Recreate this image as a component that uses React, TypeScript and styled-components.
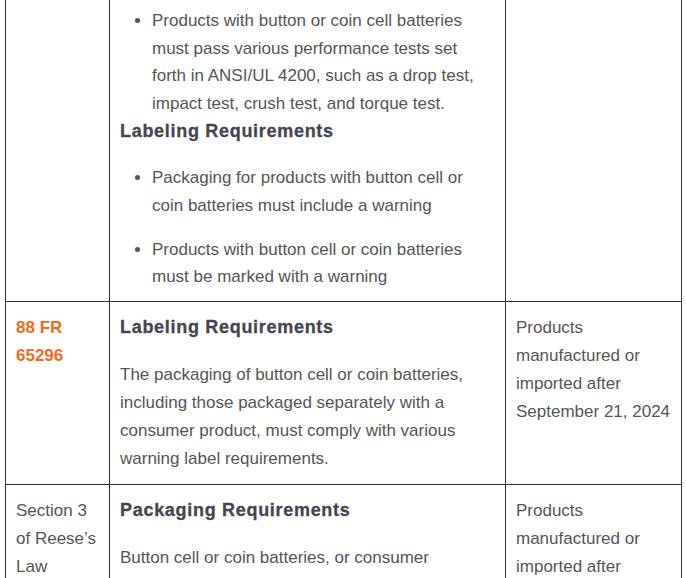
import { createGlobalStyle } from "styled-components";
import styled from "styled-components";

const GlobalStyle = createGlobalStyle`
  html, body {
    margin: 0;
    padding: 0;
    background: #fff;
  }
  body {
    font-family: "Liberation Sans", Arial, sans-serif;
    color: #555;
    overflow: hidden;
  }
`;

const Page = styled.div`
  padding: 0 0 0 5px;
  width: 686px;
  height: 578px;
  box-sizing: border-box;
  overflow: hidden;
`;

const Table = styled.div`
  display: grid;
  grid-template-columns: 105px 396px 176px;
  width: 677px;
`;

// the first row is scrolled partly out of view, so it has no top border
const Row = styled.div<{ $clipped?: boolean }>`
  display: contents;
  & > div {
    padding: ${(p) => (p.$clipped ? "7px 10px 10px" : "12px 10px 11px")};
    border-top: ${(p) => (p.$clipped ? "none" : "1px solid #333")};
  }
`;

const Cell = styled.div<{ $first?: boolean }>`
  border-right: 1px solid #333;
  border-left: ${(p) => (p.$first ? "1px solid #333" : "none")};
  font-size: 17px;
  line-height: 28px;
  color: #555;
  min-width: 0;
`;

const CiteLink = styled.a`
  color: #f26a1b;
  font-weight: bold;
  text-decoration: none;
`;

const Heading = styled.h4`
  margin: 0 0 19px;
  font-size: 18px;
  font-weight: bold;
  letter-spacing: 0.7px;
  color: #45454d;
  line-height: 1.55;
  -webkit-text-stroke: 0.3px #45454d;
`;

const List = styled.ul`
  margin: 0;
  padding-left: 32px;
  line-height: 1.625;
`;

const Item = styled.li`
  & + & {
    margin-top: 16px;
  }
`;

const Para = styled.p`
  margin: 0;
`;

export default function App() {
  return (
    <>
      <GlobalStyle />
      <Page>
        <Table>
          <Row $clipped>
            <Cell $first />
            <Cell>
              <List>
                <Item>
                  Products with button or coin cell batteries must pass various
                  performance tests set forth in ANSI/UL 4200, such as a drop test,
                  impact test, crush test, and torque test.
                </Item>
              </List>
              <Heading>Labeling Requirements</Heading>
              <List>
                <Item>
                  Packaging for products with button cell or coin batteries must
                  include a warning
                </Item>
                <Item>
                  Products with button cell or coin batteries must be marked with a
                  warning
                </Item>
              </List>
            </Cell>
            <Cell />
          </Row>

          <Row>
            <Cell $first>
              <CiteLink href="#">88 FR 65296</CiteLink>
            </Cell>
            <Cell>
              <Heading>Labeling Requirements</Heading>
              <Para>
                The packaging of button cell or coin batteries, including those
                packaged separately with a consumer product, must comply with
                various warning label requirements.
              </Para>
            </Cell>
            <Cell>Products manufactured or imported after September 21, 2024</Cell>
          </Row>

          <Row>
            <Cell $first>Section 3 of Reese’s Law</Cell>
            <Cell>
              <Heading>Packaging Requirements</Heading>
              <Para>
                Button cell or coin batteries, or consumer products containing such
                batteries, must be packaged in child-resistant packaging.
              </Para>
            </Cell>
            <Cell>Products manufactured or imported after March 19, 2024</Cell>
          </Row>
        </Table>
      </Page>
    </>
  );
}
